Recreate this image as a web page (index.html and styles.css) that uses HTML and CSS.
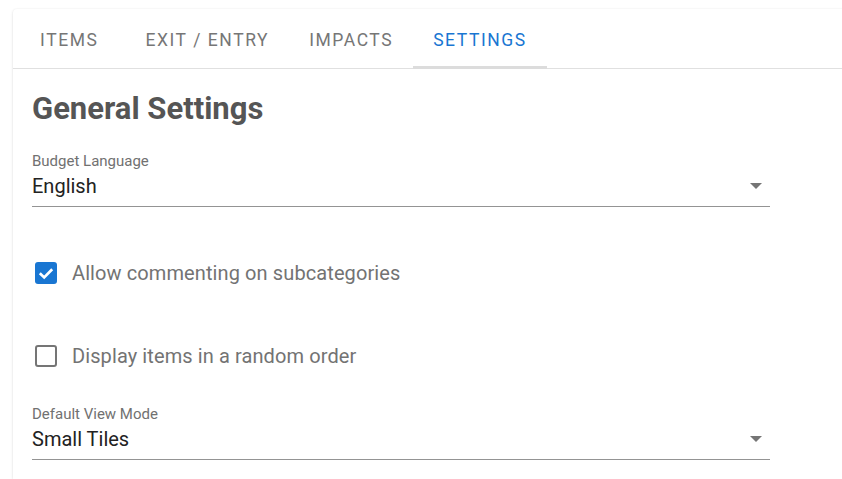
FILE: index.html
```html
<!DOCTYPE html>
<html lang="en">
<head>
<meta charset="utf-8">
<title>Settings</title>
<link rel="stylesheet" href="styles.css">
</head>
<body>
<div class="card">
  <nav class="tabs">
    <div class="tab">ITEMS</div>
    <div class="tab">EXIT / ENTRY</div>
    <div class="tab">IMPACTS</div>
    <div class="tab active">SETTINGS</div>
  </nav>
  <div class="content">
    <h2 class="title">General Settings</h2>
    <div class="field">
      <div class="field-label">Budget Language</div>
      <div class="field-row">
        <span class="field-value">English</span>
        <span class="arrow"></span>
      </div>
    </div>
    <div class="check check-first">
      <span class="box checked">
        <svg viewBox="0 0 22 22" width="22" height="22"><path d="M4.8 11.2 L9.2 15.4 L17.2 7.2" fill="none" stroke="#fff" stroke-width="2.7"/></svg>
      </span>
      <span class="check-label">Allow commenting on subcategories</span>
    </div>
    <div class="check check-second">
      <span class="box"></span>
      <span class="check-label">Display items in a random order</span>
    </div>
    <div class="field field-last">
      <div class="field-label">Default View Mode</div>
      <div class="field-row">
        <span class="field-value">Small Tiles</span>
        <span class="arrow"></span>
      </div>
    </div>
  </div>
</div>
</body>
</html>
```
FILE: styles.css
```css
html, body {
  margin: 0;
  padding: 0;
  background: #ffffff;
  overflow: hidden;
}
body {
  font-family: Roboto, "Liberation Sans", sans-serif;
  width: 842px;
  height: 479px;
}
.card {
  margin: 9px 0 0 13px;
  width: 835px;
  height: 470px;
  background: #fff;
  border-radius: 4px 0 0 0;
  box-shadow: 0 1px 3px rgba(0,0,0,0.12), 0 0 2px rgba(0,0,0,0.06);
}
.tabs {
  display: flex;
  height: 59px;
  border-bottom: 1px solid #e0e0e0;
}
.tab {
  min-width: 112.5px;
  box-sizing: border-box;
  padding: 2px 20px 0;
  display: flex;
  align-items: center;
  justify-content: center;
  font-size: 17.5px;
  letter-spacing: 1.56px;
  color: #767676;
  position: relative;
}
.tab.active {
  color: #1976d2;
}
.tab.active::after {
  content: "";
  position: absolute;
  left: 0;
  right: 0;
  bottom: -1px;
  height: 3px;
  background: #dcdcdc;
}
.content {
  padding: 0 19px;
}
.title {
  margin: 21px 0 0;
  font-size: 31px;
  line-height: 37px;
  font-weight: 700;
  color: #555555;
}
.field {
  width: 738px;
  margin-top: 25px;
  border-bottom: 1px solid #949494;
}
.field-label {
  font-size: 15px;
  line-height: 18px;
  color: #717171;
}
.field-row {
  display: flex;
  align-items: center;
  justify-content: space-between;
  height: 30px;
  padding-top: 1px;
  padding-bottom: 5px;
}
.field-value {
  font-size: 20px;
  color: #222222;
}
.arrow {
  width: 0;
  height: 0;
  margin-right: 8px;
  border-left: 6px solid transparent;
  border-right: 6px solid transparent;
  border-top: 6px solid #757575;
}
.check {
  display: flex;
  align-items: center;
  gap: 15px;
  padding-left: 3px;
}
.check-first {
  margin-top: 54px;
}
.check-second {
  margin-top: 59px;
}
.box {
  width: 22px;
  height: 22px;
  box-sizing: border-box;
  border: 2.5px solid #757575;
  border-radius: 3px;
  display: flex;
}
.box.checked {
  background: #1976d2;
  border: none;
}
.check-label {
  font-size: 20px;
  letter-spacing: 0.1px;
  color: #737373;
}
.field-last {
  margin-top: 37px;
}
```
